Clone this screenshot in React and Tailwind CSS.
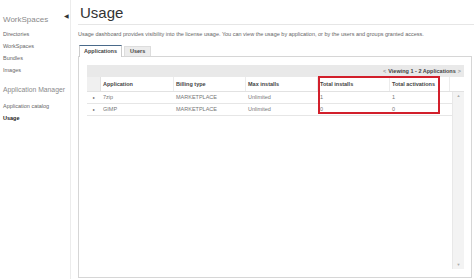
import React from 'react';

const sideLinks = ['Directories', 'WorkSpaces', 'Bundles', 'Images'];

const columns = [
    { label: 'Application', w: 'w-[73px]' },
    { label: 'Billing type', w: 'w-[72px]' },
    { label: 'Max installs', w: 'w-[72px]' },
    { label: 'Total installs', w: 'w-[72px]' },
    { label: 'Total activations', w: 'w-[60px]' },
];

const rows = [
    ['7zip', 'MARKETPLACE', 'Unlimited', '1', '1'],
    ['GIMP', 'MARKETPLACE', 'Unlimited', '0', '0'],
];

const Sidebar = () => (
    <aside className="relative w-[71px] shrink-0 border-r border-[#ececec] pl-[3px] pt-[15px]">
        <span className="absolute right-[1px] top-[12px] text-[6px] text-[#333]">◀</span>
        <div className="text-[8px] text-[#8a8a8a] leading-[10px]">WorkSpaces</div>
        <ul className="mt-[5px] flex flex-col gap-[4px] text-[5.5px] leading-[8px] text-[#666]">
            {sideLinks.map(l => <li key={l}>{l}</li>)}
        </ul>
        <div className="mt-[11px] text-[6.8px] text-[#8a8a8a] leading-[10px] whitespace-nowrap">Application Manager</div>
        <ul className="mt-[7px] flex flex-col gap-[4px] text-[5.5px] leading-[8px] text-[#666]">
            <li>Application catalog</li>
            <li className="font-bold text-[#222]">Usage</li>
        </ul>
    </aside>
);

const Grid = () => (
    <div className="relative w-[377px] h-[204px] flex flex-col">
        {/* caption */}
        <div className="h-[12px] bg-[#e9e9e9] flex items-center justify-end pr-[3px] text-[5.5px] font-bold text-[#444]">
            <span className="text-[#999] mr-[2px]">&lt;</span>Viewing 1 - 2 Applications<span className="text-[#999] ml-[2px]">&gt;</span>
        </div>
        {/* header */}
        <div className="flex h-[15px] border-b border-[#e2e2e2] text-[5.5px] font-bold text-[#444]">
            <div className="w-[14px] bg-[#f0f0f0] border-r border-[#e2e2e2]"></div>
            {columns.map(c => (
                <div key={c.label} className={`${c.w} flex items-center pl-[2px] border-r border-[#ececec]`}>{c.label}</div>
            ))}
        </div>
        <div className="flex flex-1">
            <div className="flex-1">
                {rows.map(r => (
                    <div key={r[0]} className="flex h-[12px] border-b border-[#e6e6e6] text-[5.5px] text-[#777]">
                        <div className="w-[14px] flex items-center justify-center text-[4px] text-[#555]">▸</div>
                        {columns.map((c, i) => (
                            <div key={c.label} className={`${c.w} flex items-center pl-[2px]`}>{r[i]}</div>
                        ))}
                    </div>
                ))}
            </div>
            {/* scrollbar */}
            <div className="w-[12px] bg-[#f3f3f3] border-l border-[#e8e8e8] flex flex-col justify-between items-center text-[4px] text-[#aaa] py-[1px]">
                <span>▲</span>
                <span>▼</span>
            </div>
        </div>
        {/* annotation */}
        <div className="absolute left-[231px] top-[11px] w-[122px] h-[38px] border-2 border-[#d21f2b]"></div>
    </div>
);

const App = () => (
    <div className="w-[474px] h-[279px] overflow-hidden bg-white flex font-['Liberation_Sans',Arial,sans-serif]">
        <Sidebar />
        <main className="flex-1 pl-[7px] flex flex-col">
            <h1 className="h-[25px] pt-[4px] pl-[2px] border-b border-[#e6e6e6] text-[15px] leading-[17px] text-[#333]">Usage</h1>
            <p className="mt-[6px] text-[5.5px] leading-[7px] text-[#666]">
                Usage dashboard provides visibility into the license usage. You can view the usage by application, or by the users and groups granted access.
            </p>
            <div className="mt-[6px] flex items-end pl-[1px] text-[5.5px] font-bold text-[#444]">
                <div className="h-[12px] px-[4px] flex items-center bg-white border border-b-0 border-[#ccc] border-t-[#4a6a8a] relative top-[1px]">Applications</div>
                <div className="ml-[2px] h-[10px] px-[5px] flex items-center bg-[#ececec] border border-b-0 border-[#ddd]">Users</div>
            </div>
            <div className="w-[394px] h-[222px] border border-[#d6d6d6] pl-[8px] pt-[8px]">
                <Grid />
            </div>
        </main>
    </div>
);

export default App;
